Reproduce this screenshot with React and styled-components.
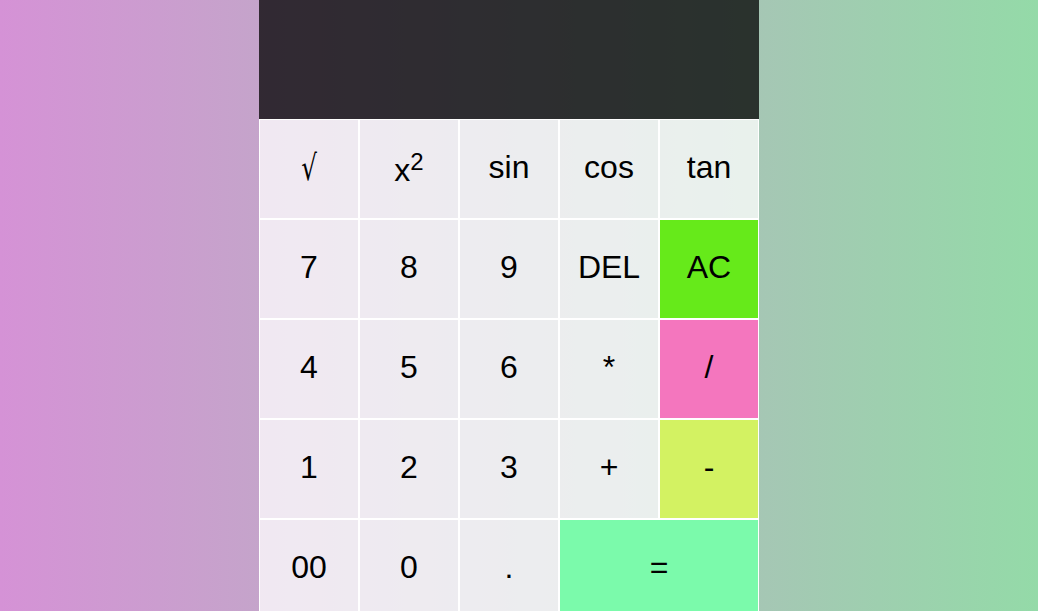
import React from "react";
import styled, { createGlobalStyle } from "styled-components";

const Global = createGlobalStyle`
  html, body {
    margin: 0;
    padding: 0;
    overflow: hidden;
  }
  body {
    background: linear-gradient(to right, rgb(213, 146, 214), rgb(148, 218, 168));
    font-family: "Liberation Sans", Arial, sans-serif;
    min-height: 100vh;
  }
`;

const Page = styled.div`
  display: flex;
  justify-content: center;
  padding-right: 20px;
  min-height: 100vh;
`;

const Calculator = styled.div`
  width: 500px;
  display: flex;
  flex-direction: column;
`;

const Display = styled.div`
  height: 119px;
  background: rgba(0, 0, 0, 0.75);
  color: #fff;
  display: flex;
  align-items: flex-end;
  justify-content: flex-end;
  padding: 10px;
  box-sizing: border-box;
  font-size: 2.5rem;
`;

const Keys = styled.div`
  display: grid;
  grid-template-columns: repeat(5, 100px);
  grid-auto-rows: 100px;
`;

const Key = styled.button`
  box-sizing: border-box;
  border: 1px solid #fff;
  margin: 0;
  padding: 0 0 3px;
  font-family: "Liberation Sans", Arial, sans-serif;
  font-size: 2rem;
  color: #000;
  background: ${(p) => p.$bg || "rgba(255, 255, 255, 0.75)"};
  grid-column: ${(p) => (p.$wide ? "span 2" : "auto")};
  cursor: pointer;
  display: flex;
  align-items: center;
  justify-content: center;

  sup {
    font-size: 0.75em;
    position: relative;
    top: 0.05em;
  }
`;

const Root = styled.span`
  font-family: "DejaVu Serif", "Liberation Serif", serif;
  font-weight: 200;
  font-size: 1.1em;
  transform: scaleX(0.7);
  display: inline-block;
`;

const rows = [
  [{ k: "√", root: true }, { k: "x2", sup: true }, { k: "sin" }, { k: "cos" }, { k: "tan" }],
  [{ k: "7" }, { k: "8" }, { k: "9" }, { k: "DEL" }, { k: "AC", bg: "#66ea1a" }],
  [{ k: "4" }, { k: "5" }, { k: "6" }, { k: "*" }, { k: "/", bg: "#f476be" }],
  [{ k: "1" }, { k: "2" }, { k: "3" }, { k: "+" }, { k: "-", bg: "#d3f262" }],
  [{ k: "00" }, { k: "0" }, { k: "." }, { k: "=", bg: "#7bfaab", wide: true }],
];

export default function App() {
  return (
    <>
      <Global />
      <Page>
        <Calculator>
          <Display />
          <Keys>
            {rows.flat().map((b) => (
              <Key key={b.k} $bg={b.bg} $wide={b.wide}>
                {b.sup ? (
                  <span>
                    x<sup>2</sup>
                  </span>
                ) : b.root ? (
                  <Root>{b.k}</Root>
                ) : (
                  b.k
                )}
              </Key>
            ))}
          </Keys>
        </Calculator>
      </Page>
    </>
  );
}
